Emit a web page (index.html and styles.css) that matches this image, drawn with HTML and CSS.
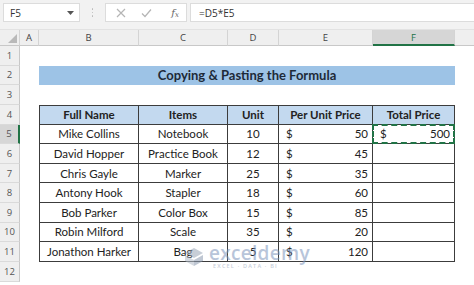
FILE: index.html
```html
<!DOCTYPE html>
<html>
<head>
<meta charset="utf-8">
<link rel="stylesheet" href="styles.css">
</head>
<body>
<div class="app">
  <div class="fbar">
    <div class="namebox"><span>F5</span><svg class="caret" width="7" height="4" viewBox="0 0 7 4"><path d="M0 0H7L3.5 4Z" fill="#555"/></svg></div>
    <div class="dots"><i></i><i></i><i></i></div>
    <div class="fbtns">
      <svg class="ico" width="10" height="10" viewBox="0 0 10 10"><path d="M1 1L9 9M9 1L1 9" stroke="#b5b5b5" stroke-width="1.2" fill="none"/></svg>
      <svg class="ico" width="11" height="10" viewBox="0 0 11 10"><path d="M1 5.5L4 8.5L10 1.5" stroke="#b5b5b5" stroke-width="1.2" fill="none"/></svg>
      <span class="fx">f<sub>x</sub></span>
    </div>
    <div class="formula">=D5*E5</div>
  </div>
  <div class="sheet">
    <div class="corner"><svg width="9" height="9" viewBox="0 0 9 9"><path d="M9 0V9H0Z" fill="#b9b9b9"/></svg></div>
    <div class="ch">A</div><div class="ch">B</div><div class="ch">C</div><div class="ch">D</div><div class="ch">E</div><div class="ch sel">F</div><div class="ch last"></div>

    <div class="rh">1</div><div class="blank"></div><div class="blank"></div><div class="blank"></div><div class="blank"></div><div class="blank"></div><div class="blank"></div><div class="blank"></div>

    <div class="rh">2</div><div class="blank"></div><div class="title">Copying &amp; Pasting the Formula</div><div class="blank"></div>

    <div class="rh">3</div><div class="blank"></div><div class="blank"></div><div class="blank"></div><div class="blank"></div><div class="blank"></div><div class="blank"></div><div class="blank"></div>

    <div class="rh">4</div><div class="blank"></div>
    <div class="t th first">Full Name</div><div class="t th">Items</div><div class="t th">Unit</div><div class="t th">Per Unit Price</div><div class="t th">Total Price</div><div class="blank"></div>

    <div class="rh sel">5</div><div class="blank"></div>
    <div class="t first">Mike Collins</div><div class="t">Notebook</div><div class="t">10</div><div class="t money"><span>$</span><span>50</span></div><div class="t money active"><span>$</span><span>500</span></div><div class="blank"></div>

    <div class="rh">6</div><div class="blank"></div>
    <div class="t first">David Hopper</div><div class="t">Practice Book</div><div class="t">12</div><div class="t money"><span>$</span><span>45</span></div><div class="t"></div><div class="blank"></div>

    <div class="rh">7</div><div class="blank"></div>
    <div class="t first">Chris Gayle</div><div class="t">Marker</div><div class="t">25</div><div class="t money"><span>$</span><span>35</span></div><div class="t"></div><div class="blank"></div>

    <div class="rh">8</div><div class="blank"></div>
    <div class="t first">Antony Hook</div><div class="t">Stapler</div><div class="t">18</div><div class="t money"><span>$</span><span>60</span></div><div class="t"></div><div class="blank"></div>

    <div class="rh">9</div><div class="blank"></div>
    <div class="t first">Bob Parker</div><div class="t">Color Box</div><div class="t">15</div><div class="t money"><span>$</span><span>85</span></div><div class="t"></div><div class="blank"></div>

    <div class="rh">10</div><div class="blank"></div>
    <div class="t first">Robin Milford</div><div class="t">Scale</div><div class="t">35</div><div class="t money"><span>$</span><span>20</span></div><div class="t"></div><div class="blank"></div>

    <div class="rh">11</div><div class="blank"></div>
    <div class="t first">Jonathon Harker</div><div class="t">Bag</div><div class="t">5</div><div class="t money"><span>$</span><span>120</span></div><div class="t"></div><div class="blank"></div>

    <div class="rh">12</div><div class="blank"></div><div class="blank"></div><div class="blank"></div><div class="blank"></div><div class="blank"></div><div class="blank"></div><div class="blank"></div>
  </div>
  <div class="watermark">
    <svg width="22" height="20" viewBox="0 0 22 20"><path d="M2 6L11 1L20 6L11 11Z" fill="#9aa7b8"/><path d="M2 8L11 13L11 19L2 14Z" fill="#b3bdca"/><path d="M20 8L11 13L11 19L20 14Z" fill="#8c9bb0"/></svg>
    <div class="wm-text">
      <div class="wm-name">exceldemy</div>
      <div class="wm-sub">EXCEL · DATA · BI</div>
    </div>
  </div>
</div>
</body>
</html>
```

FILE: styles.css
```css
* { box-sizing: border-box; }
html, body { margin: 0; padding: 0; }
body {
  width: 474px;
  height: 285px;
  overflow: hidden;
  background: #fff;
  font-family: Lato, "Open Sans", sans-serif;
}
.app {
  position: relative;
  width: 474px;
  height: 285px;
  overflow: hidden;
}
.fbar {
  height: 30px;
  background: #f2f2f2;
  display: flex;
  align-items: flex-start;
  padding: 3px 0 0 3px;
  border-bottom: 1px solid #e2e2e2;
}
.namebox {
  width: 77px;
  height: 19px;
  background: #fff;
  border: 1px solid #dcdcdc;
  display: flex;
  align-items: center;
  justify-content: space-between;
  padding: 0 5px 0 6px;
  font-family: "Open Sans", sans-serif;
  font-size: 10px;
  color: #333;
}
.dots {
  width: 25px;
  height: 19px;
  display: flex;
  flex-direction: column;
  align-items: center;
  justify-content: center;
  gap: 2px;
}
.dots i {
  width: 1.5px;
  height: 1.5px;
  background: #b8b8b8;
  border-radius: 50%;
}
.fbtns {
  width: 82px;
  height: 19px;
  background: #fff;
  border: 1px solid #dcdcdc;
  display: flex;
  align-items: center;
  padding: 0 7px 0 10px;
  gap: 15px;
}
.fbtns .ico { display: block; }
.fx {
  margin-left: auto;
  font-family: "DejaVu Serif", "Liberation Serif", serif;
  font-style: italic;
  font-size: 10px;
  color: #666;
}
.fx sub { font-size: 7px; vertical-align: -1px; }
.formula {
  flex: 1;
  height: 19px;
  margin-left: 3px;
  background: #fff;
  border: 1px solid #dcdcdc;
  border-right: none;
  display: flex;
  align-items: center;
  padding-left: 8px;
  font-family: "Open Sans", sans-serif;
  font-size: 10px;
  color: #333;
}
.sheet {
  display: grid;
  grid-template-columns: 20px 19px 100px 89px 51px 94px 82px 19px;
  grid-template-rows: 16px repeat(12, 19.64px);
  background: #fff;
  color: #222;
  font-size: 11.5px;
}
.corner {
  background: #efefef;
  border-right: 1px solid #d4d4d4;
  border-bottom: 1px solid #c8c8c8;
  display: flex;
  align-items: flex-end;
  justify-content: flex-end;
  padding: 0 2px 2px 0;
}
.corner svg { display: block; }
.ch {
  background: #efefef;
  border-right: 1px solid #d4d4d4;
  border-bottom: 1px solid #c8c8c8;
  display: flex;
  align-items: center;
  justify-content: center;
  font-family: "Open Sans", sans-serif;
  font-size: 9.5px;
  color: #444;
}
.ch.sel {
  background: #d6d6d6;
  border-bottom: 2px solid #217346;
  color: #217346;
}
.ch.last { border-right: none; }
.rh {
  background: #efefef;
  border-right: 1px solid #c8c8c8;
  border-bottom: 1px solid #dadada;
  display: flex;
  align-items: center;
  justify-content: center;
  font-family: "Open Sans", sans-serif;
  font-size: 9.5px;
  color: #555;
}
.rh.sel {
  background: #d6d6d6;
  border-right: 2px solid #217346;
}
.title {
  grid-column: 3 / 8;
  background: #9dc3e6;
  display: flex;
  align-items: center;
  justify-content: center;
  font-weight: bold;
  font-size: 13px;
  color: #1e2a38;
}
.t {
  border-right: 1px solid #3c3c3c;
  border-bottom: 1px solid #3c3c3c;
  display: flex;
  align-items: center;
  justify-content: center;
  white-space: nowrap;
}
.t.first { border-left: 1px solid #3c3c3c; }
.t.th {
  border-top: 1px solid #3c3c3c;
  border-bottom: 1.5px solid #3c3c3c;
  background: #c3d9ef;
  font-weight: bold;
}
.t.money {
  justify-content: space-between;
  padding: 0 4px 0 7px;
}
.t.active {
  position: relative;
}
.t.active::after {
  content: "";
  position: absolute;
  left: -1px;
  top: -1px;
  right: -1px;
  bottom: -1px;
  border: 2px dashed #217346;
}
.watermark {
  position: absolute;
  left: 183px;
  top: 244px;
  display: flex;
  align-items: center;
  gap: 4px;
  opacity: 0.55;
  pointer-events: none;
}
.watermark svg { display: block; }
.wm-text { display: flex; flex-direction: column; align-items: flex-start; }
.wm-name {
  font-family: "Open Sans", sans-serif;
  font-weight: 600;
  font-size: 19px;
  line-height: 18px;
  color: #7f97bd;
  letter-spacing: 0.3px;
}
.wm-sub {
  font-family: "Open Sans", sans-serif;
  font-size: 5.5px;
  font-weight: 600;
  letter-spacing: 1.2px;
  color: #9aa8bb;
  margin-left: 4px;
}
```
